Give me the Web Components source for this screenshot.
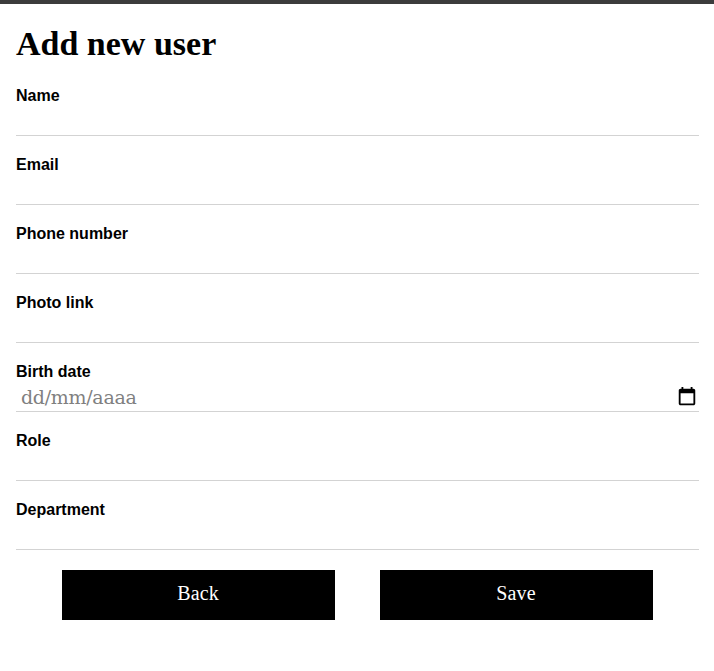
<!DOCTYPE html>
<html lang="en"><head><meta charset="utf-8"><title>Add new user</title>
<style>html,body{margin:0;padding:0;background:#fff}</style></head>
<body>
<user-form></user-form>
<template id="t-field"><style>
:host{display:flex;flex-direction:column;height:68px;border-bottom:1px solid #d3d3d3;font:700 16px/18px "Liberation Sans",sans-serif;color:#000}
.l{padding-top:20px}
.c{flex:1;display:flex;align-items:center;min-height:0}
</style><div class="l"><slot name="label"></slot></div><div class="c"><slot></slot></div></template>
<template id="t-date"><style>
:host{display:flex;flex:1;align-items:center;justify-content:space-between;padding:2px 1px 0 5px;font:400 19px/24px "DejaVu Serif",serif;color:#808080}
span{letter-spacing:-.3px}
svg{display:block;width:22px;height:22px}
</style><span>dd/mm/aaaa</span><svg viewBox="0 0 24 24" fill="#000"><path d="M19 3h-1V1h-2v2H8V1H6v2H5c-1.1 0-2 .9-2 2v14c0 1.1.9 2 2 2h14c1.1 0 2-.9 2-2V5c0-1.1-.9-2-2-2zm0 16H5V8h14v11z"/></svg></template>
<template id="t-btn"><style>
:host{display:flex;align-items:center;justify-content:center;box-sizing:border-box;padding:0 1px 4px 0;width:273px;height:50px;background:#000;color:#fff;font:400 20px/24px "Liberation Serif",serif;letter-spacing:.1px}
</style><slot></slot></template>
<template id="t-form"><style>
:host{display:block;border-top:4px solid #3c3c3c;padding:0 15px 0 16px;color:#000}
h1{margin:0;height:63px;box-sizing:border-box;padding-top:20px;font:700 34px/40px "Liberation Serif",serif}
.actions{display:flex;justify-content:center;gap:45px;margin-top:20px}
</style>
<h1>Add new user</h1>
<form-field><span slot="label">Name</span></form-field>
<form-field><span slot="label">Email</span></form-field>
<form-field><span slot="label">Phone number</span></form-field>
<form-field><span slot="label">Photo link</span></form-field>
<form-field><span slot="label">Birth date</span><date-box></date-box></form-field>
<form-field><span slot="label">Role</span></form-field>
<form-field><span slot="label">Department</span></form-field>
<div class="actions"><form-button>Back</form-button><form-button>Save</form-button></div>
</template>
<script>
function def(name,id){customElements.define(name,class extends HTMLElement{constructor(){super();this.attachShadow({mode:'open'}).appendChild(document.getElementById(id).content.cloneNode(true));}});}
def('form-field','t-field');def('date-box','t-date');def('form-button','t-btn');def('user-form','t-form');
</script>
</body></html>
